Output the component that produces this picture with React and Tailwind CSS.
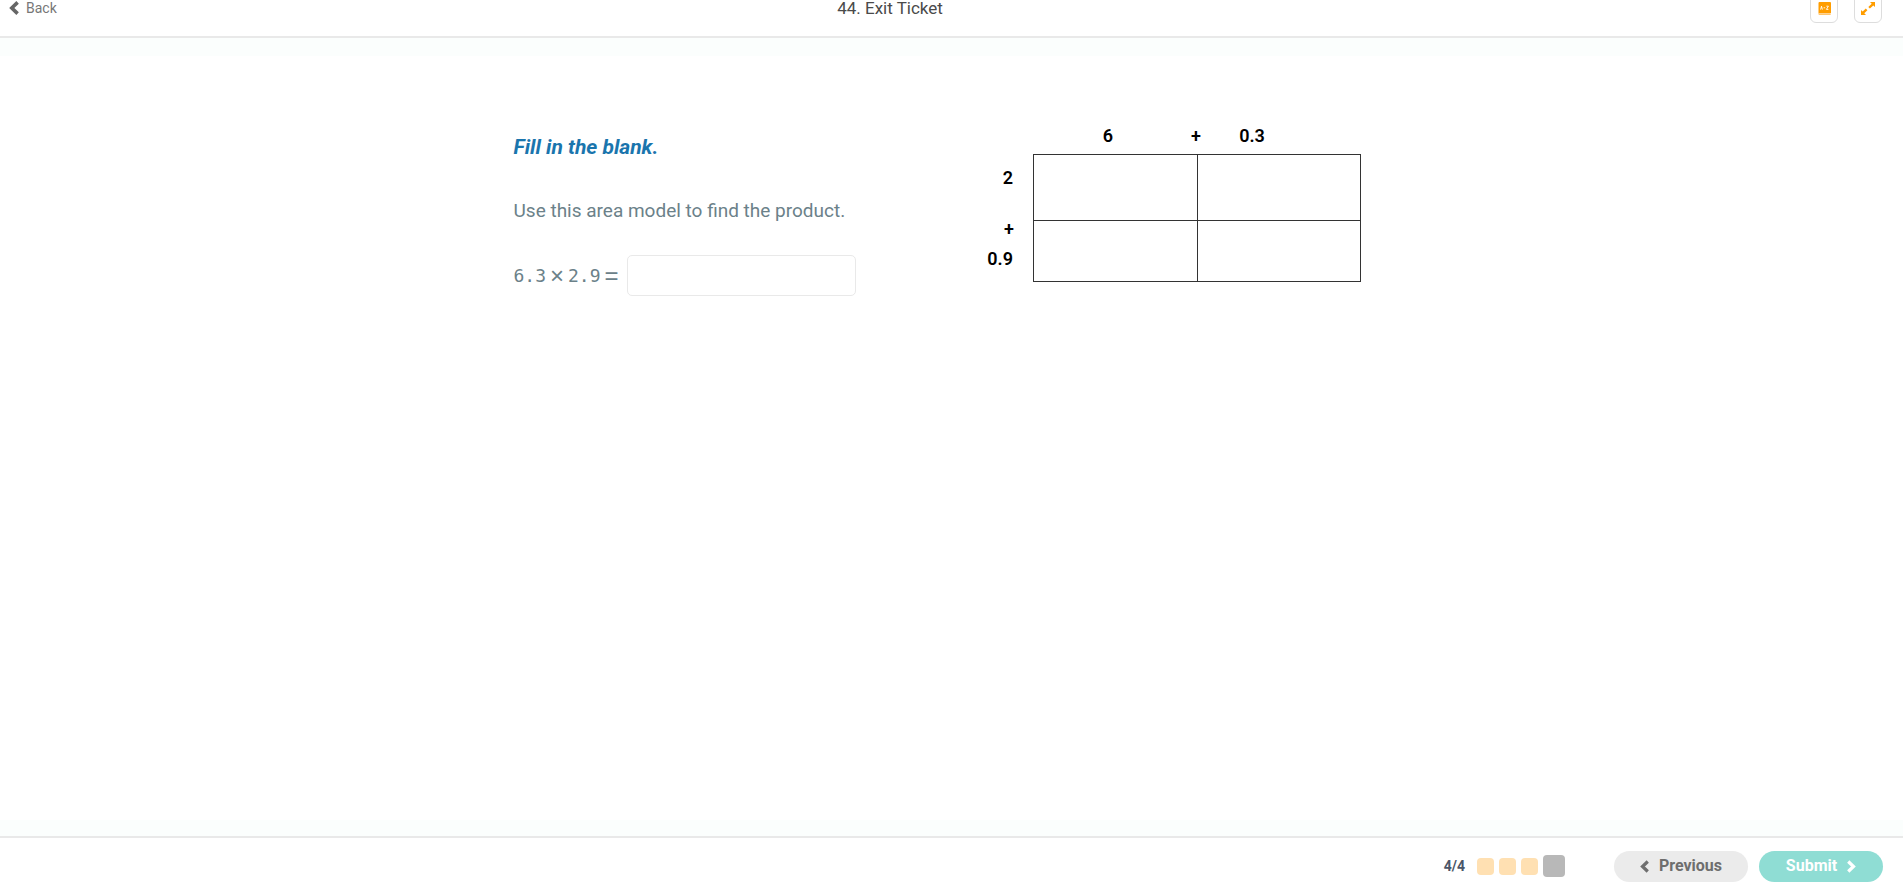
import React, { useState } from 'react';

const pages = [1, 2, 3, 4];

function ChevronLeft({ className }) {
  return (
    <svg className={className} viewBox="0 0 10 14" fill="none" stroke="currentColor" strokeWidth="3.6" aria-hidden="true">
      <path d="M8.6 1.4 2.8 7l5.8 5.6" />
    </svg>
  );
}

function ChevronRight({ className }) {
  return (
    <svg className={className} viewBox="0 0 10 14" fill="none" stroke="currentColor" strokeWidth="3.6" aria-hidden="true">
      <path d="M1.4 1.4 7.2 7l-5.8 5.6" />
    </svg>
  );
}

function DictionaryIcon() {
  return (
    <svg className="w-[13px] h-[13px]" viewBox="0 0 13 13" aria-hidden="true">
      <path d="M1.5 0H12a1 1 0 0 1 1 1v10H1.5Q.8 11 .5 11.4V1a1 1 0 0 1 1-1z" fill="#ff9d00" />
      <path d="M.5 11.2h12.2v1.2q0 .6-.6.6H1.3q-.8 0-.8-.8z" fill="#ffc56e" />
      <path d="M2.6 7.6l.9-3.4.9 3.4M5.6 5.8h1.6M8.4 4.2h2L8.4 7.4h2" fill="none" stroke="#fff" strokeWidth=".9" />
    </svg>
  );
}

function ExpandIcon() {
  return (
    <svg className="w-[14px] h-[13px]" viewBox="0 0 14 13" fill="#ff9d00" aria-hidden="true">
      <path d="M9 0h5v5l-1.7-1.6-3.4 3.1-1.6-1.5 3.4-3.2z" />
      <path d="M5 13H0V8l1.7 1.6 3.1-3 1.6 1.6-3.1 3.1z" />
    </svg>
  );
}

// 2 x 2 area model: (6 + 0.3) across, (2 + 0.9) down
function AreaModel() {
  return (
    <svg
      width="380"
      height="160"
      viewBox="0 0 380 160"
      role="img"
      aria-label="Area model"
      className="font-['Roboto',sans-serif] text-[18px] font-semibold"
    >
      <g fill="none" stroke="#333" strokeWidth="1">
        <rect x="49.5" y="31.5" width="327" height="127" />
        <path d="M213.5 31.5v127M49.5 97.5h327" />
      </g>
      <g fill="#000" textAnchor="middle">
        <text x="124" y="19">6</text>
        <text x="212" y="19">+</text>
        <text x="268" y="19">0.3</text>
      </g>
      <g fill="#000" textAnchor="end">
        <text x="29" y="61">2</text>
        <text x="30" y="112">+</text>
        <text x="29" y="142">0.9</text>
      </g>
    </svg>
  );
}

function App() {
  const [answer, setAnswer] = useState('');
  const current = 4;

  return (
    <div className="min-h-screen flex flex-col bg-white font-['Roboto','Open_Sans',sans-serif]">
      {/* Header */}
      <header className="h-[38px] border-b-2 border-[#e9e9e9] pl-5 pr-[21px]">
        <div className="-mt-1.5 h-7 grid grid-cols-[1fr_auto_1fr] items-center">
          <a href="#back" className="-ml-[11px] flex items-center gap-[7px] pb-0.5 text-[14px] leading-4 text-[#777]">
            <ChevronLeft className="w-[10px] h-[14px] text-[#666]" />
            Back
          </a>
          <h1 className="pr-[122px] pb-0.5 text-[17px] leading-6 text-[#4a4a4a]">44. Exit Ticket</h1>
          <div className="flex justify-end gap-4">
            <button aria-label="Dictionary" className="w-7 h-[29px] flex items-center justify-center border border-[#ddd] rounded-md">
              <DictionaryIcon />
            </button>
            <button aria-label="Full screen" className="w-7 h-[29px] flex items-center justify-center border border-[#ddd] rounded-md">
              <ExpandIcon />
            </button>
          </div>
        </div>
      </header>

      {/* Question */}
      <main className="grow flex flex-col bg-[#fbfefd] pt-[18px] pb-4">
        <div className="grow bg-white">
          <div className="mx-auto grid max-w-[876px] grid-cols-[470px_1fr] items-start pt-[67px]">
            <div className="text-[19px] leading-8 text-[#6b8189]">
              <h2 className="pt-2 text-[21px] font-bold italic text-[#1a75ad]">Fill in the blank.</h2>
              <p className="mt-8">Use this area model to find the product.</p>
              <div className="mt-7 flex items-center gap-2">
                <label htmlFor="answer" className="flex gap-1 font-['DejaVu_Sans_Mono',monospace] text-[18px]">
                  <span>6.3</span>
                  <span className="font-['Liberation_Sans',sans-serif] text-[24px]">×</span>
                  <span>2.9</span>
                  <span className="font-['Liberation_Sans',sans-serif] text-[24px]">=</span>
                </label>
                <input
                  id="answer"
                  type="text"
                  value={answer}
                  onChange={(e) => setAnswer(e.target.value)}
                  className="w-[229px] h-[41px] px-3 bg-white border border-[#e9e9e9] rounded-[5px]"
                />
              </div>
            </div>
            <AreaModel />
          </div>
        </div>
      </main>

      {/* Footer */}
      <footer className="h-[58px] flex items-center justify-end border-t-2 border-[#e9e9e9] px-5">
        <span className="mr-3 text-[14px] font-bold text-[#4a5568]">4/4</span>
        <div className="mr-[49px] flex items-center gap-[5px]">
          {pages.map((page) => (
            <span
              key={page}
              className={page === current ? 'w-[22px] h-[22px] rounded bg-[#b8b8b8]' : 'w-[17px] h-[17px] rounded bg-[#ffe0b2]'}
            />
          ))}
        </div>
        <div className="flex gap-[11px] text-[16px] font-bold">
          <button className="w-[134px] h-[31px] flex items-center justify-center gap-2.5 rounded-full bg-[#ebebeb] text-[#6e6e6e]">
            <ChevronLeft className="w-[9px] h-[13px]" />
            Previous
          </button>
          <button className="w-[124px] h-[31px] flex items-center justify-center gap-2.5 rounded-full bg-[#8fddd4] text-white">
            Submit
            <ChevronRight className="w-[9px] h-[13px]" />
          </button>
        </div>
      </footer>
    </div>
  );
}

export default App;
